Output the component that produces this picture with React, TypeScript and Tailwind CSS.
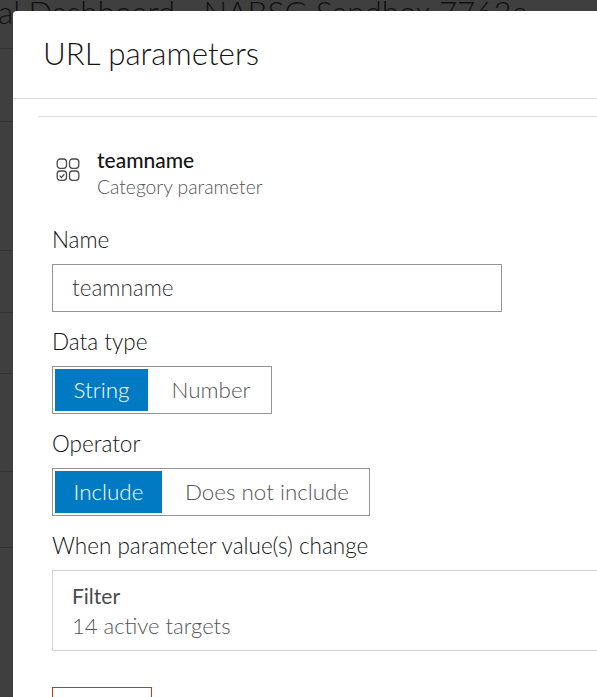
const font = "font-['Lato','Open_Sans',sans-serif]";

function CategoryIcon() {
  return (
    <svg width="24" height="24" viewBox="0 0 24 24" fill="none" stroke="#4a4a4a" strokeWidth="1.3" className="mt-[10px] shrink-0">
      <rect x="1.2" y="1" width="9.3" height="9.3" rx="3" />
      <rect x="13.5" y="1" width="9.3" height="9.3" rx="3" />
      <rect x="1.2" y="13" width="9.3" height="9.3" rx="3" />
      <rect x="13.5" y="13" width="9.3" height="9.3" rx="3" />
      <path d="M3.6 17.7l1.8 1.8 3-3.4" strokeWidth="1.2" />
    </svg>
  );
}

function Segmented({ active, other, activeWidth, width }: { active: string; other: string; activeWidth: string; width: string }) {
  return (
    <div className={`mt-[9px] flex h-[48px] items-stretch border border-[#949494] p-[2px] ${width}`}>
      <div className={`flex items-center justify-center bg-[#007ac2] text-[22.4px] font-light text-white ${activeWidth}`}>{active}</div>
      <div className="flex flex-1 items-center justify-center pl-[5px] text-[22.4px] font-light text-[#555555]">{other}</div>
    </div>
  );
}

function Label({ children }: { children: React.ReactNode }) {
  return <div className="mt-[15px] text-[22.5px] font-light leading-[30px] text-[#151515]">{children}</div>;
}

export default function App() {
  return (
    <div className={`relative h-[697px] w-[597px] overflow-hidden bg-[#3f3f3f] ${font}`}>
      {/* page behind the modal */}
      <div className="flex flex-col">
        <div className="h-[49px] border-b border-[#333333] whitespace-nowrap text-[31.3px] font-light leading-[24px] text-[#111111]">
          <span className="ml-[-2px]">al Dashboard - NABSG Sandbox 7763e</span>
        </div>
        <div className="h-[73px] border-b border-[#333333]" />
        <div className="h-[129px] border-b border-[#333333]" />
        <div className="h-[62px] border-b border-[#333333]" />
        <div className="h-[61px] border-b border-[#333333]" />
        <div className="h-[98px] border-b border-[#333333]" />
        <div className="h-[76px] border-b border-[#333333]" />
      </div>

      {/* modal */}
      <div className="absolute left-[13px] top-[11px] h-[700px] w-[600px] rounded-tl-[4px] bg-white">
        <div className="flex h-[88px] items-center border-b border-[#dfdfdf] pb-[2px] pl-[30px] text-[31.3px] font-light text-[#151515]">URL parameters</div>
        <div className="pl-[25px]">
          <div className="mt-[17px] border-t border-[#dfdfdf]" />
          <div className="flex items-start gap-[17px] pl-[18px] pt-[31px]">
            <CategoryIcon />
            <div>
              <div className="text-[21px] font-medium leading-[24px] text-[#151515]">teamname</div>
              <div className="mt-[2px] text-[19.3px] font-light leading-[26px] text-[#555555]">Category parameter</div>
            </div>
          </div>
          <div className="flex w-[560px] flex-col pl-[14px]">
            <div className="mt-[25px] text-[22.5px] font-light leading-[30px] text-[#151515]">Name</div>
            <div className="mt-[9px] flex h-[48px] w-[450px] items-center border border-[#949494] pl-[19px] text-[22.5px] font-light text-[#333333]">teamname</div>
            <Label>Data type</Label>
            <Segmented active="String" other="Number" activeWidth="w-[93px]" width="w-[220px]" />
            <Label>Operator</Label>
            <Segmented active="Include" other="Does not include" activeWidth="w-[107px]" width="w-[318px]" />
            <Label>When parameter value(s) change</Label>
            <div className="mt-[9px] flex h-[81px] w-[600px] flex-col justify-center border border-r-0 border-[#d4d4d4] pl-[19px]">
              <div className="text-[21px] leading-[30px] text-[#4a4a4a]">Filter</div>
              <div className="text-[22px] font-light leading-[30px] text-[#555555]">14 active targets</div>
            </div>
            <div className="mt-[36px] h-[40px] w-[100px] border border-[#d83020]" />
          </div>
        </div>
      </div>
    </div>
  );
}
